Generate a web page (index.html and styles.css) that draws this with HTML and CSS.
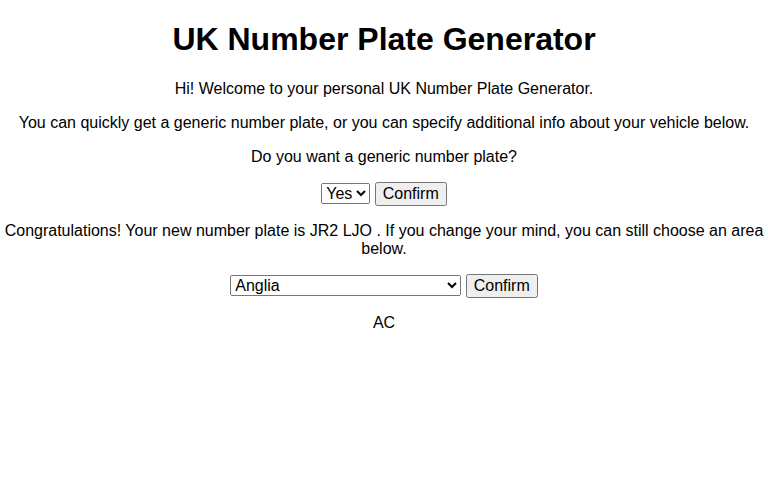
FILE: index.html
```html
<!DOCTYPE html>
<html lang="en">
<head>
<meta charset="utf-8">
<title>UK Number Plate Generator</title>
<link rel="stylesheet" href="styles.css">
</head>
<body>
<main class="page">
  <h1 class="title">UK Number Plate Generator</h1>
  <p class="text">Hi! Welcome to your personal UK Number Plate Generator.</p>
  <p class="text">You can quickly get a generic number plate, or you can specify additional info about your vehicle below.</p>
  <p class="text">Do you want a generic number plate?</p>
  <form class="row">
    <select class="field field-small">
      <option>Yes</option>
      <option>No</option>
    </select>
    <button type="button" class="btn">Confirm</button>
  </form>
  <p class="text">Congratulations! Your new number plate is JR2 LJO . If you change your mind, you can still choose an area below.</p>
  <form class="row">
    <select class="field field-area">
      <option>Anglia</option>
    </select>
    <button type="button" class="btn">Confirm</button>
  </form>
  <p class="text">AC</p>
</main>
</body>
</html>
```
FILE: styles.css
```css
html, body {
  margin: 0;
  padding: 0;
  background: #ffffff;
}
body {
  font-family: "Liberation Sans", Arial, sans-serif;
  font-size: 16px;
  color: #000000;
}
.page {
  text-align: center;
}
.title {
  font-size: 32px;
  font-weight: bold;
  margin: 21.44px 0;
}
.text {
  margin: 16px 0;
  line-height: 18px;
}
.row {
  margin: 16px 0;
}
.field, .btn {
  font-family: "Liberation Sans", Arial, sans-serif;
  font-size: 16px;
}
.field-area {
  width: 231px;
}
```
